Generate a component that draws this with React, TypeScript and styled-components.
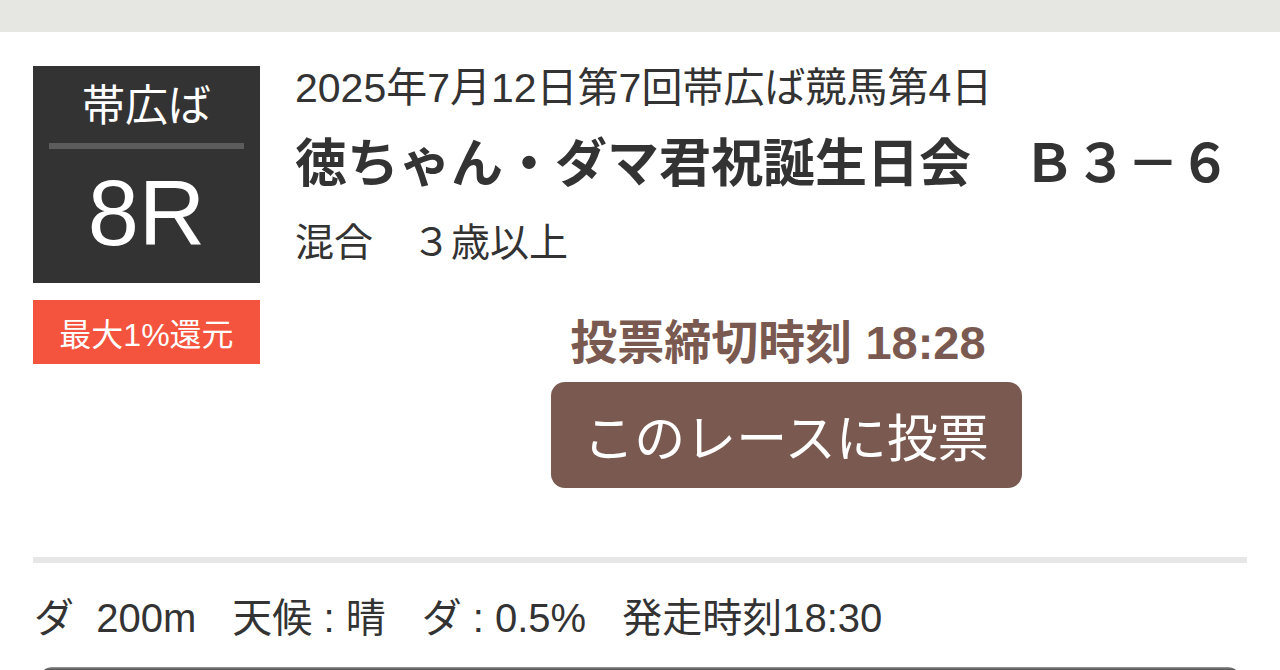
import React from "react";
import styled, { createGlobalStyle } from "styled-components";

const Global = createGlobalStyle`
  html, body { margin: 0; padding: 0; overflow: hidden; background: #fff; }
  body { font-family: "Liberation Sans", "Noto Sans CJK JP", sans-serif; color: #333; }
`;

const TopBar = styled.div`
  height: 32px;
  background: #e6e6e2;
`;

const Main = styled.main`
  padding: 34px 33px 0;
`;

const Row = styled.section`
  display: flex;
  gap: 35px;
`;

const LeftCol = styled.div`
  width: 227px;
  flex: none;
  display: flex;
  flex-direction: column;
  gap: 17px;
`;

const RaceBox = styled.div`
  height: 217px;
  background: #333333;
  color: #fff;
  display: flex;
  flex-direction: column;
  align-items: stretch;
  box-sizing: border-box;
  padding: 16px 16px 0;
`;

const Venue = styled.div`
  font-size: 43px;
  line-height: 48px;
  text-align: center;
`;

const Sep = styled.div`
  height: 6px;
  background: #5c5c5c;
  margin-top: 13px;
`;

const RaceNo = styled.div`
  font-size: 92px;
  line-height: 92px;
  text-align: center;
  margin-top: 18px;
`;

const Badge = styled.div`
  height: 64px;
  background: #f4533e;
  color: #fff;
  font-size: 32px;
  display: flex;
  align-items: center;
  justify-content: center;
`;

const RightCol = styled.div`
  flex: 1;
  display: flex;
  flex-direction: column;
`;

const DateLine = styled.div`
  font-size: 41px;
  line-height: 44px;
`;

const Title = styled.h1`
  margin: 24px 0 0;
  font-size: 52px;
  line-height: 60px;
  font-weight: 700;
  white-space: pre;
`;

const Cond = styled.div`
  margin-top: 27px;
  font-size: 39px;
  line-height: 44px;
  white-space: pre;
`;

const VoteArea = styled.div`
  display: flex;
  flex-direction: column;
  align-items: center;
  padding-left: 30px;
  margin-top: 51px;
`;

const Deadline = styled.div`
  font-size: 47px;
  line-height: 54px;
  font-weight: 700;
  color: #7a5a50;
  margin-left: -16px;
`;

const VoteButton = styled.button`
  margin-top: 12px;
  width: 471px;
  height: 106px;
  border: none;
  border-radius: 14px;
  background: #7a5a50;
  color: #fff;
  font-family: "Noto Sans CJK JP", sans-serif;
  font-size: 51px;
  cursor: pointer;
`;

const Divider = styled.hr`
  margin: 69px 0 0;
  border: none;
  height: 6px;
  background: #e6e6e6;
`;

const Info = styled.div`
  margin-top: 33px;
  display: flex;
  gap: 36px;
  font-size: 40px;
  line-height: 44px;
  padding-left: 1px;
`;

const InfoItem = styled.span`
  white-space: pre;
`;

const TableHead = styled.div`
  margin: 27px 7px 0;
  height: 40px;
  border-radius: 12px 12px 0 0;
  background: linear-gradient(#9a9a9a 0, #4a4a4a 3px, #4a4a4a 100%);
`;

export default function App() {
  return (
    <>
      <Global />
      <TopBar />
      <Main>
        <Row>
          <LeftCol>
            <RaceBox>
              <Venue>帯広ば</Venue>
              <Sep />
              <RaceNo>8R</RaceNo>
            </RaceBox>
            <Badge>最大1%還元</Badge>
          </LeftCol>
          <RightCol>
            <DateLine>2025年7月12日第7回帯広ば競馬第4日</DateLine>
            <Title>徳ちゃん・ダマ君祝誕生日会　Ｂ３－６</Title>
            <Cond>混合　３歳以上</Cond>
            <VoteArea>
              <Deadline>投票締切時刻 18:28</Deadline>
              <VoteButton>このレースに投票</VoteButton>
            </VoteArea>
          </RightCol>
        </Row>
        <Divider />
        <Info>
          <InfoItem>ダ  200m</InfoItem>
          <InfoItem>天候 : 晴</InfoItem>
          <InfoItem>ダ : 0.5%</InfoItem>
          <InfoItem>発走時刻18:30</InfoItem>
        </Info>
        <TableHead />
      </Main>
    </>
  );
}
